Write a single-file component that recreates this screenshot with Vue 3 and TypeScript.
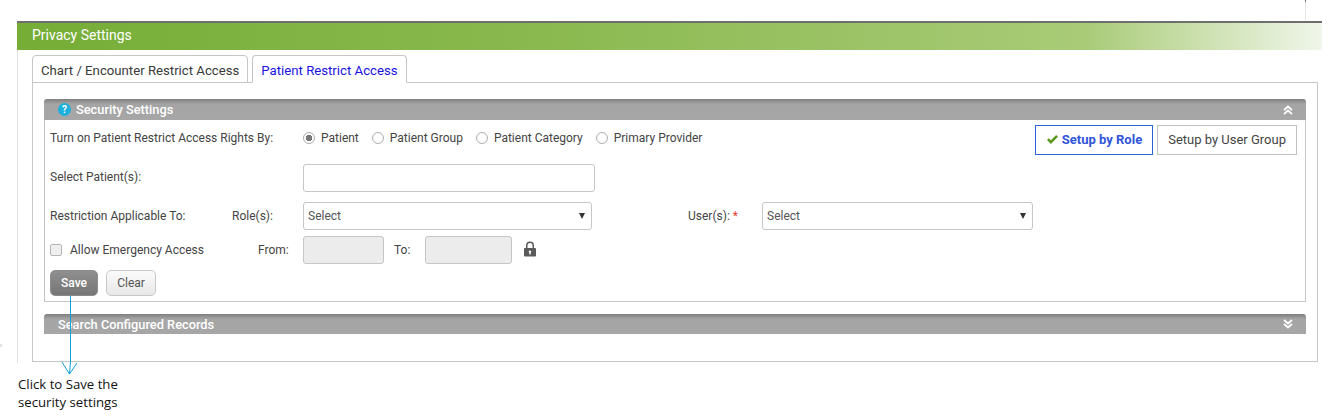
<template>
  <div class="page">
    <div class="privacy">
      <div class="privacy-title">Privacy Settings</div>
      <div class="privacy-body">
        <div class="tabs">
          <div
            v-for="tab in tabs"
            :key="tab.label"
            class="tab"
            :class="{ active: tab.active }"
          >
            {{ tab.label }}
          </div>
        </div>
        <div class="tab-content">
          <div class="section-head">
            <span class="help">?</span>
            <span>Security Settings</span>
            <svg class="chev" viewBox="0 0 10 10" width="10" height="10">
              <path d="M1 5 5 1.500 9 5M1 9 5 5.500 9 9" />
            </svg>
          </div>
          <div class="section-body">
            <div class="row row-access">
              <span class="lbl-main">Turn on Patient Restrict Access Rights By:</span>
              <div class="radios">
                <label v-for="r in rights" :key="r" class="radio">
                  <input type="radio" name="rights" :checked="r === 'Patient'" />
                  {{ r }}
                </label>
              </div>
              <div class="setup">
                <button class="setup-btn on">
                  <svg viewBox="0 0 14 12" width="13" height="11">
                    <path d="M1 6.500 3 4.500 5.200 6.800 11 1 13 3 5.200 10.800Z" />
                  </svg>
                  Setup by Role
                </button>
                <button class="setup-btn">Setup by User Group</button>
              </div>
            </div>

            <div class="row row-patient">
              <span class="lbl-main">Select Patient(s):</span>
              <input class="field patient" type="text" />
            </div>

            <div class="row row-restrict">
              <span class="lbl-first">Restriction Applicable To:</span>
              <span class="lbl-second">Role(s):</span>
              <div class="field select role">Select<i class="caret"></i></div>
              <span class="lbl-user">User(s): <em>*</em></span>
              <div class="field select user">Select<i class="caret"></i></div>
            </div>

            <div class="row row-emergency">
              <label class="check">
                <input type="checkbox" />
                Allow Emergency Access
              </label>
              <span class="lbl-from">From:</span>
              <input class="field date" type="text" disabled />
              <span class="lbl-to">To:</span>
              <input class="field date date-to" type="text" disabled />
              <svg class="lock" viewBox="0 0 12 16" width="12" height="16">
                <path
                  fill-rule="evenodd"
                  d="M2 7V4.500a4 4 0 0 1 8 0V7h1a1 1 0 0 1 1 1v6.500a1 1 0 0 1-1 1H1a1 1 0 0 1-1-1V8a1 1 0 0 1 1-1ZM3.500 7h5V4.500a2.500 2.500 0 0 0-5 0ZM6 9.500a1.200 1.200 0 0 0-.7 2.200V13.500h1.400v-1.800A1.200 1.200 0 0 0 6 9.500Z"
                />
              </svg>
            </div>

            <div class="row row-actions">
              <button class="btn save">Save</button>
              <button class="btn clear">Clear</button>
            </div>
          </div>

          <div class="section-head closed">
            <span>Search Configured Records</span>
            <svg class="chev" viewBox="0 0 10 10" width="10" height="10">
              <path d="M1 1 5 4.500 9 1M1 5 5 8.500 9 5" />
            </svg>
          </div>
        </div>
      </div>
    </div>

    <!-- callout drawn over the form -->
    <i class="top-tick"></i>
    <i class="edge-tick"></i>
    <svg class="callout-line" width="90" height="90" viewBox="0 0 90 90">
      <path d="M70.500 0V66L69.500 78M62 66 69.500 78 77 67" />
    </svg>
    <div class="callout-text">Click to Save the<br />security settings</div>
  </div>
</template>

<script setup lang="ts">
const tabs = [
  { label: "Chart / Encounter Restrict Access", active: false },
  { label: "Patient Restrict Access", active: true },
];

const rights = ["Patient", "Patient Group", "Patient Category", "Primary Provider"];
</script>

<style>
html,
body {
  margin: 0;
  background: #fff;
}
</style>

<style scoped>
.page {
  position: relative;
  height: 417px;
  overflow: hidden;
  box-sizing: border-box;
  padding: 21px 10px 0 17px;
  font-family: Roboto, "Liberation Sans", sans-serif;
  font-size: 12px;
  color: #444;
  background: #fff;
}
.privacy-title {
  height: 29px;
  box-sizing: border-box;
  border-top: 2px solid #6e6e6e;
  padding: 0 15px;
  line-height: 25px;
  font-size: 14px;
  color: #fff;
  background: linear-gradient(to right, #75ad36 0%, #8ab94f 40%, #a9cb78 82%, #f0f6e9 100%);
}
.privacy-body {
  height: 313px;
  box-sizing: border-box;
  border-left: 1px solid #e2e2e2;
  padding: 5px 4px 0 14px;
}
.tabs {
  display: flex;
  gap: 4px;
  position: relative;
  z-index: 1;
}
.tab {
  height: 28px;
  box-sizing: border-box;
  padding: 0 8px;
  border: 1px solid #c6c6c6;
  border-radius: 4px 4px 0 0;
  line-height: 30px;
  font-size: 13.200px;
  color: #3a3a3a;
}
.tab.active {
  color: #1a12e0;
  background: #fff;
  border-bottom-color: #fff;
}
.tab-content {
  height: 280px;
  box-sizing: border-box;
  margin-top: -1px;
  border: 1px solid #c6c6c6;
  padding: 16px 11px 0;
}
.section-head {
  display: flex;
  align-items: center;
  gap: 5px;
  height: 21px;
  box-sizing: border-box;
  padding: 0 13px 0 14px;
  border-radius: 3px 3px 0 0;
  font-size: 12.800px;
  font-weight: 500;
  color: #fff;
  background: linear-gradient(#7e7e7e 0, #a5a5a5 5px, #a6a6a6 100%);
}
.section-head.closed {
  height: 20px;
  margin-top: 12px;
}
.help {
  width: 13px;
  height: 13px;
  border-radius: 50%;
  background: #1cb1dc;
  text-align: center;
  line-height: 13px;
  font-size: 10px;
  font-weight: 700;
}
.chev {
  margin-left: auto;
  fill: none;
  stroke: #fff;
  stroke-width: 1.800;
}
.section-body {
  height: 182px;
  box-sizing: border-box;
  border: 1px solid #c6c6c6;
  border-top: 0;
  padding: 5px 5px 0;
}
.row {
  display: flex;
  align-items: center;
}
.lbl-main {
  width: 253px;
  flex: none;
}
.row-access {
  height: 30px;
  align-items: flex-start;
  line-height: 26px;
}
.radios {
  display: flex;
  gap: 13px;
}
.radio {
  display: flex;
  align-items: center;
  gap: 6px;
}
.radio input {
  appearance: none;
  width: 12px;
  height: 12px;
  margin: 0;
  border: 1px solid #adadad;
  border-radius: 50%;
  background: #fff;
}
.radio input:checked {
  background: radial-gradient(circle, #777 0 3px, #fff 3.500px);
}
.setup {
  display: flex;
  gap: 4px;
  margin-left: auto;
  margin-right: 3px;
}
.setup-btn {
  height: 30px;
  box-sizing: border-box;
  padding: 0 10px 2px;
  border: 1px solid #c0c0c0;
  background: #fff;
  font: 13px Roboto, sans-serif;
  color: #444;
}
.setup-btn.on {
  border-color: #2a63dc;
  color: #2f55d8;
  font-weight: 700;
}
.setup-btn svg {
  fill: #5c9a1e;
  vertical-align: -1px;
}
.field {
  box-sizing: border-box;
  height: 28px;
  margin: 0;
  border: 1px solid #c6c6c6;
  border-radius: 3px;
  background: #fff;
  outline: 0;
}
.row-patient {
  height: 28px;
  margin-top: 9px;
}
.row-patient .lbl-main {
  margin-bottom: 2px;
}
.patient {
  width: 292px;
}
.row-restrict {
  height: 28px;
  margin-top: 10px;
}
.lbl-first {
  width: 182px;
  flex: none;
}
.lbl-second {
  width: 71px;
  flex: none;
}
.select {
  display: flex;
  align-items: center;
  justify-content: space-between;
  padding: 0 6px 0 4px;
  color: #555;
}
.caret {
  width: 0;
  height: 0;
  border: 3px solid transparent;
  border-top: 6px solid #333;
  border-bottom: 0;
}
.role {
  width: 289px;
}
.lbl-user {
  width: 74px;
  margin-left: 96px;
  flex: none;
}
.lbl-user em {
  color: #e8402c;
  font-style: normal;
}
.user {
  width: 271px;
}
.row-emergency {
  height: 28px;
  margin-top: 6px;
}
.check {
  display: flex;
  align-items: center;
  gap: 8px;
  width: 208px;
  flex: none;
}
.check input {
  appearance: none;
  width: 12px;
  height: 12px;
  margin: 0;
  border: 1px solid #b5b5b5;
  border-radius: 2px;
  background: #efefef;
}
.lbl-from {
  width: 45px;
  flex: none;
}
.date {
  width: 81px;
  background: #ececec;
}
.lbl-to {
  width: 31px;
  margin-left: 10px;
  flex: none;
}
.date-to {
  width: 87px;
}
.lock {
  margin: 0 0 3px 12px;
  fill: #5a5a5a;
}
.row-actions {
  gap: 8px;
  margin-top: 6px;
}
.btn {
  height: 26px;
  box-sizing: border-box;
  border: 1px solid #c8c8c8;
  border-radius: 5px;
  font: 12px Roboto, sans-serif;
  padding: 0;
}
.save {
  width: 48px;
  border-color: #8c8c8c;
  color: #fff;
  font-weight: 500;
  background: linear-gradient(#8f8f8f, #767676);
}
.clear {
  width: 50px;
  color: #555;
  background: linear-gradient(#fbfbfb, #e8e8e8);
}
.top-tick {
  position: absolute;
  left: 1305px;
  top: 0;
  width: 1px;
  height: 20px;
  background: linear-gradient(#444 0, #e6e6e6 3px);
}
.edge-tick {
  position: absolute;
  left: 0;
  top: 344px;
  width: 2px;
  height: 3px;
  background: #e4e4e4;
}
.callout-line {
  position: absolute;
  left: 0;
  top: 296px;
  fill: none;
  stroke: #11a0dc;
  stroke-width: 1;
}
.callout-text {
  position: absolute;
  left: 18px;
  top: 375px;
  font-family: "Open Sans", sans-serif;
  font-size: 13.200px;
  line-height: 18px;
  color: #111;
}
</style>
